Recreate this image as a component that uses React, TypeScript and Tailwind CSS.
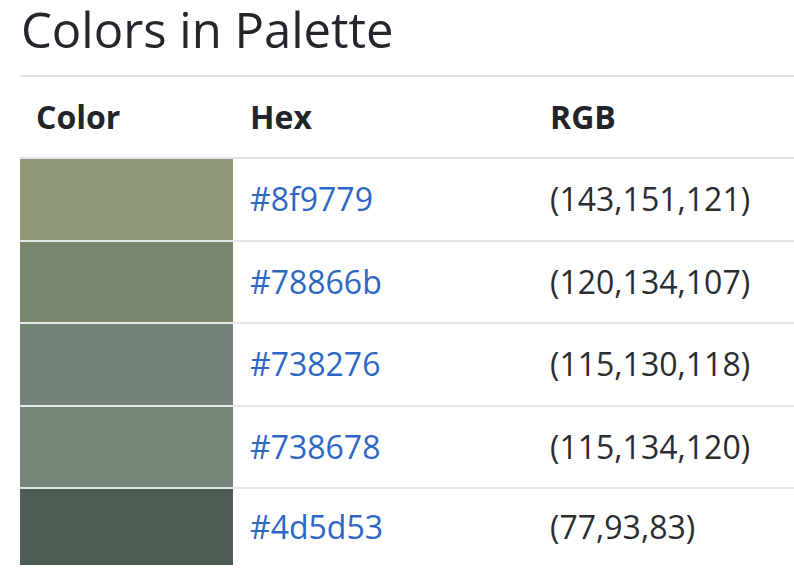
import React from "react";

type PaletteColor = {
  Hex: string;
  Rgb: string;
};

const _Colors: PaletteColor[] = [
  { Hex: "#8f9779", Rgb: "(143,151,121)" },
  { Hex: "#78866b", Rgb: "(120,134,107)" },
  { Hex: "#738276", Rgb: "(115,130,118)" },
  { Hex: "#738678", Rgb: "(115,134,120)" },
  { Hex: "#4d5d53", Rgb: "(77,93,83)" },
];

export default function App() {
  return (
    <div className="w-[794px] h-[578px] overflow-hidden bg-white pl-5 font-['Open_Sans','Liberation_Sans',sans-serif] text-[#212529]">
      <h2 className="text-[49px] leading-[58px] font-normal pl-[1px] text-[#23272b]">Colors in Palette</h2>
      <div className="mt-[17px] w-[800px] border-t-2 border-[#e1e3e5]">
        <table className="w-[800px] border-collapse table-fixed">
          <colgroup>
            <col className="w-[213px]" />
            <col className="w-[300px]" />
            <col />
          </colgroup>
          <thead>
            <tr className="border-b-2 border-[#dee2e6]">
              <th className="h-[81px] pl-[16px] text-left align-middle text-[32px] font-bold">Color</th>
              <th className="h-[81px] pl-[17px] text-left align-middle text-[32px] font-bold">Hex</th>
              <th className="h-[81px] pl-[17px] text-left align-middle text-[32px] font-bold">RGB</th>
            </tr>
          </thead>
          <tbody>
            {_Colors.map((Color, i) => {
              const RowHeight = i === _Colors.length - 1 ? "h-[77px]" : "h-[82.5px]";
              return (
                <tr key={Color.Hex} className={i > 0 ? "border-t-2 border-[#e4e6e8]" : ""}>
                  <td className={`${RowHeight} p-0`} style={{ backgroundColor: Color.Hex }} />
                  <td className={`${RowHeight} pl-[17px] align-middle text-[32px] text-[#2d67c4]`}>{Color.Hex}</td>
                  <td className={`${RowHeight} pl-[17px] align-middle text-[32px] text-[#2a2d30]`}>{Color.Rgb}</td>
                </tr>
              );
            })}
          </tbody>
        </table>
      </div>
    </div>
  );
}
